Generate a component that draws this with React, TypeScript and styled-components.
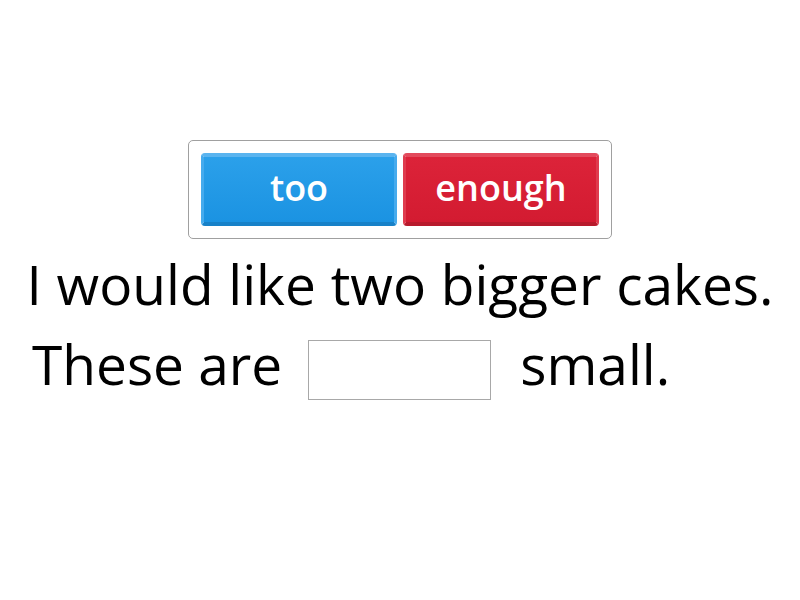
import React from "react";
import styled, { createGlobalStyle } from "styled-components";

const Global = createGlobalStyle`
  html, body { margin: 0; padding: 0; background: #fff; }
  body { font-family: "Open Sans", "Liberation Sans", sans-serif; }
`;

const Page = styled.div`
  width: 800px;
  height: 600px;
  display: flex;
  flex-direction: column;
  align-items: center;
  padding-top: 140px;
  box-sizing: border-box;
`;

const Tray = styled.div`
  display: flex;
  gap: 6px;
  padding: 12px;
  border: 1px solid #a0a0a0;
  border-radius: 5px;
  background: #fff;
`;

const Tile = styled.div<{ $tone: "blue" | "red" }>`
  width: 196px;
  height: 73px;
  box-sizing: border-box;
  border-radius: 4px;
  display: flex;
  align-items: center;
  justify-content: center;
  color: #fff;
  font-size: 36px;
  font-weight: 600;
  padding-bottom: 4px;
  background: ${(p) =>
    p.$tone === "blue"
      ? "linear-gradient(#2ba0ea, #1b93e2)"
      : "linear-gradient(#dc2339, #d31b31)"};
  border-top: 4px solid ${(p) => (p.$tone === "blue" ? "#5ab4ef" : "#e34a5c")};
  border-left: 3px solid ${(p) => (p.$tone === "blue" ? "#46abed" : "#df3b4e")};
  border-right: 3px solid ${(p) => (p.$tone === "blue" ? "#46abed" : "#df3b4e")};
  border-bottom: 4px solid ${(p) => (p.$tone === "blue" ? "#1781c8" : "#b81a2c")};
`;

const Sentence = styled.div`
  align-self: stretch;
  display: flex;
  flex-direction: column;
  margin-top: 5px;
  font-size: 55px;
  color: #000;
  line-height: 80px;
`;

const FirstLine = styled.div`
  text-align: center;
  white-space: nowrap;
  word-spacing: 0.5px;
`;

const SecondLine = styled.div`
  display: flex;
  align-items: flex-start;
  padding-left: 32px;
  white-space: pre;
`;

const Blank = styled.div`
  width: 183px;
  height: 60px;
  box-sizing: border-box;
  border: 1px solid #a8a8a8;
  margin: 16px 29px 0 26px;
  background: #fff;
`;

export default function App() {
  return (
    <>
      <Global />
      <Page>
        <Tray>
          <Tile $tone="blue">too</Tile>
          <Tile $tone="red">enough</Tile>
        </Tray>
        <Sentence>
          <FirstLine>I would like two bigger cakes.</FirstLine>
          <SecondLine>
            <span>These are</span>
            <Blank />
            <span>small.</span>
          </SecondLine>
        </Sentence>
      </Page>
    </>
  );
}
